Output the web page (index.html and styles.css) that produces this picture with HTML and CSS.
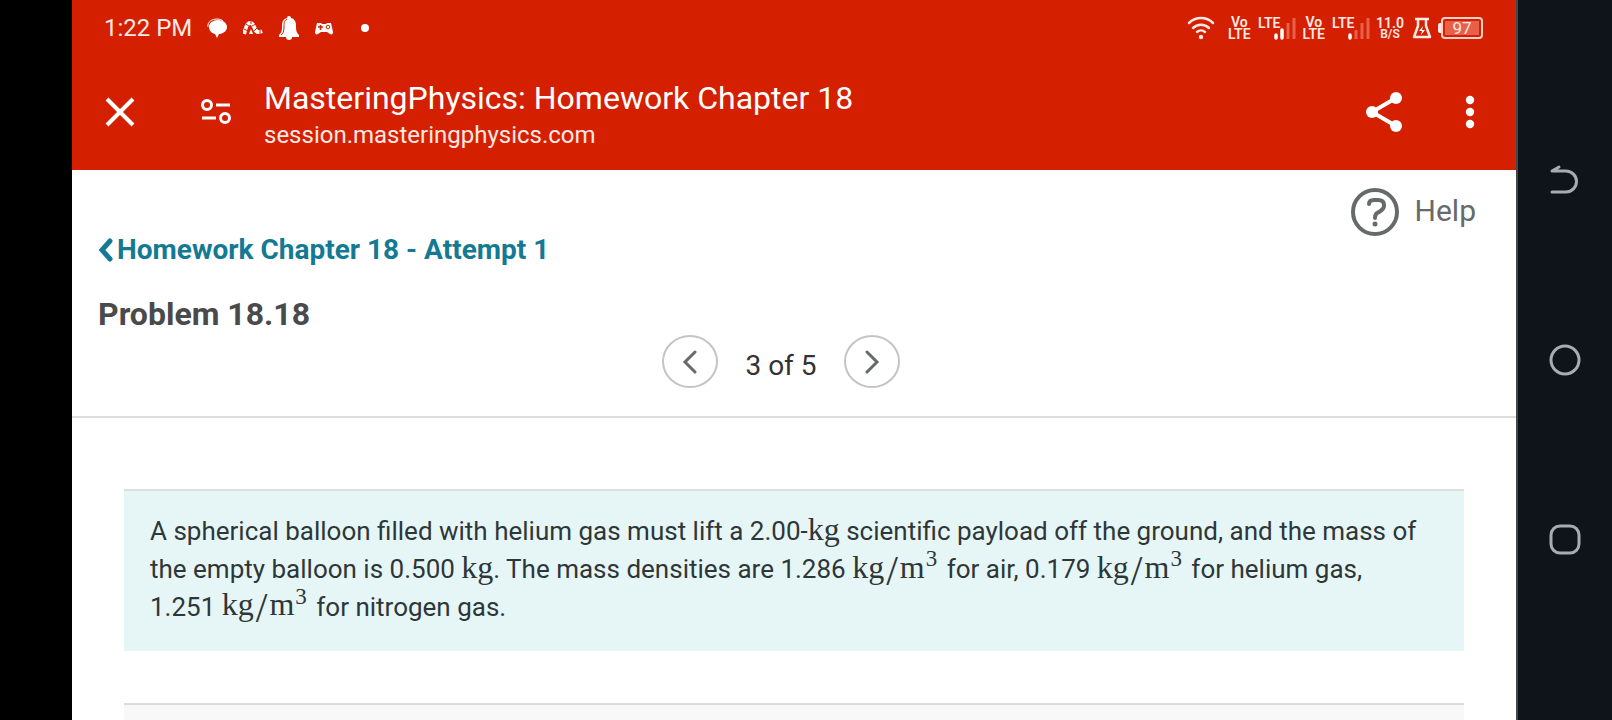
FILE: index.html
```html
<!DOCTYPE html>
<html lang="en">
<head>
    <meta charset="UTF-8">
    <meta name="viewport" content="width=device-width, initial-scale=1.0">
    <title>MasteringPhysics: Homework Chapter 18</title>
    <link rel="stylesheet" href="styles.css">
</head>
<body>
    <div class="screen">
        <div class="browser">
            <div class="top">
                <div class="status-bar">
                    <div class="status-left">
                        <span class="time">1:22 PM</span>
                        <svg class="chat" width="20" height="20" viewBox="0 0 20 20">
                            <path d="M1 9C0 4 5 1 10 1c3 0 5 1 6 2" fill="none" stroke="#fff" stroke-width="1"/>
                            <path d="M11 2c5 0 9 3 9 7 0 4-4 7-8 7l-2 4-2-4C4 15 2 12 2 9c0-4 4-7 9-7z" fill="#fff"/>
                        </svg>
                        <svg class="arch" width="20" height="16" viewBox="0 0 20 16">
                            <path d="M1 14C3 6 5 3 7 3s4 3 5 6 3 4 7 2" fill="none" stroke="#fff" stroke-width="4"/>
                            <path d="M8 9l2 5H6z" fill="#fff"/>
                            <path d="M1 9l4 2M3 4l4 3M8 0v4M13 4l-4 2M14 8l-3 3M17 9v5" stroke="#d41f00" stroke-width="1"/>
                        </svg>
                        <svg class="bell" width="20" height="26" viewBox="0 0 20 26">
                            <path d="M10 1a2 2 0 0 1 2 2c4 1 5 4 5 8 0 6 1 7 3 9v2H0v-2c2-2 3-3 3-9 0-4 1-7 5-8a2 2 0 0 1 2-2z" fill="#fff"/>
                            <path d="M7 22h6a3 3 0 0 1-6 0z" fill="#fff"/>
                            <path d="M8 4C5 6 5 8 5 12c0 4-1 7-3 8" fill="none" stroke="#d41f00" stroke-width="1"/>
                        </svg>
                        <svg class="gamepad" width="18" height="13" viewBox="0 0 18 13">
                            <path d="M2 1h4l1 1h4l1-1h4l2 9c0 2-1 3-3 2l-3-2H6l-3 2c-2 1-3 0-3-2z" fill="#fff"/>
                            <path d="M3 5h5M5.500 3v5" stroke="#d41f00" stroke-width="1.500"/>
                            <circle cx="13" cy="5" r="1.800" fill="none" stroke="#d41f00" stroke-width="1"/>
                        </svg>
                        <span class="dot"></span>
                    </div>
                    <div class="status-right">
                        <svg class="wifi" width="28" height="24" viewBox="0 0 28 24">
                            <g fill="none" stroke="#ffe9e2" stroke-width="2.500" stroke-linecap="round">
                                <path d="M2 7a17 17 0 0 1 24 0"/>
                                <path d="M6 12a11.500 11.500 0 0 1 16 0"/>
                                <path d="M10 16a6 6 0 0 1 8 0"/>
                            </g>
                            <circle cx="14" cy="21" r="2.200" fill="#ffe9e2"/>
                        </svg>
                        <span class="volte"><span>Vo</span><span>LTE</span></span>
                        <svg class="signal" width="38" height="28" viewBox="0 0 38 28">
                            <text x="0" y="14">LTE</text>
                            <path d="M18 24v-3M24 24v-8" stroke="#fff" stroke-width="3.500" stroke-linecap="round"/>
                            <path d="M30 25V9M36 25V4" stroke="#e8604a" stroke-width="3"/>
                        </svg>
                        <span class="volte"><span>Vo</span><span>LTE</span></span>
                        <svg class="signal" width="38" height="28" viewBox="0 0 38 28">
                            <text x="0" y="14">LTE</text>
                            <path d="M18 24v-3" stroke="#fff" stroke-width="3.500" stroke-linecap="round"/>
                            <path d="M24 25V16M30 25V9M36 25V4" stroke="#e8604a" stroke-width="3"/>
                        </svg>
                        <span class="speed"><span>11.0</span><span class="unit">B/S</span></span>
                        <svg class="flask" width="20" height="22" viewBox="0 0 20 22">
                            <path d="M3 2h14M6 2v7L2 20h16L14 9V2" fill="none" stroke="#ffe9e2" stroke-width="2.500" stroke-linejoin="round"/>
                            <path d="M11 9l-4 5h3l-1 4 4-5h-3z" fill="#fff"/>
                        </svg>
                        <span class="battery"><span class="level">97</span></span>
                    </div>
                </div>
                <div class="toolbar">
                    <button type="button" class="icon-button close" aria-label="Close">
                        <svg width="30" height="30" viewBox="0 0 30 30">
                            <path d="M2 2l26 26M28 2L2 28" stroke="#fff" stroke-width="4"/>
                        </svg>
                    </button>
                    <button type="button" class="icon-button tune" aria-label="Site settings">
                        <svg width="32" height="28" viewBox="0 0 32 28">
                            <g fill="none" stroke="#fff" stroke-width="3">
                                <circle cx="7" cy="7" r="4.500"/>
                                <circle cx="25" cy="20" r="4.500"/>
                                <path d="M16 7h14M2 20h14"/>
                            </g>
                        </svg>
                    </button>
                    <div class="page-info">
                        <div class="page-title">MasteringPhysics: Homework Chapter 18</div>
                        <div class="page-host">session.masteringphysics.com</div>
                    </div>
                    <button type="button" class="icon-button share" aria-label="Share">
                        <svg width="38" height="42" viewBox="0 0 38 42">
                            <path d="M31 7L7 21l24 14" fill="none" stroke="#fff" stroke-width="4"/>
                            <g fill="#fff">
                                <circle cx="31" cy="7" r="6"/>
                                <circle cx="7" cy="21" r="6"/>
                                <circle cx="31" cy="35" r="6"/>
                            </g>
                        </svg>
                    </button>
                    <button type="button" class="icon-button more" aria-label="More options">
                        <svg width="10" height="34" viewBox="0 0 10 34">
                            <g fill="#fff">
                                <circle cx="5" cy="5" r="4.200"/>
                                <circle cx="5" cy="17" r="4.200"/>
                                <circle cx="5" cy="29" r="4.200"/>
                            </g>
                        </svg>
                    </button>
                </div>
            </div>

            <div class="assignment-header">
                <div class="header-row">
                    <a href="#" class="back-link">
                        <svg width="16" height="24" viewBox="0 0 16 24">
                            <path d="M12 3L4 12l8 9" fill="none" stroke="#147a94" stroke-width="5" stroke-linecap="round"/>
                        </svg>Homework Chapter 18 - Attempt 1</a>
                    <a href="#" class="help">
                        <svg width="48" height="48" viewBox="0 0 48 48">
                            <g fill="none" stroke="#666a6a" stroke-width="4" stroke-linecap="round" stroke-linejoin="round">
                                <circle cx="24" cy="24" r="22"/>
                                <path d="M18 16c0-3 2-4 5-4h4c4 0 6 2 6 5v1c0 3-2 4-5 6-3 1-4 3-4 6"/>
                            </g>
                            <circle cx="24" cy="36" r="2.500" fill="#666a6a"/>
                        </svg>
                        <span>Help</span>
                    </a>
                </div>
                <h1>Problem 18.18</h1>
                <div class="pager">
                    <button type="button" class="pager-button" aria-label="Previous">
                        <svg width="16" height="24" viewBox="0 0 16 24">
                            <path d="M13 2L3 12l10 10" fill="none" stroke="#666a6a" stroke-width="3" stroke-linecap="round"/>
                        </svg>
                    </button>
                    <span class="pager-text">3 of 5</span>
                    <button type="button" class="pager-button" aria-label="Next">
                        <svg width="16" height="24" viewBox="0 0 16 24">
                            <path d="M3 2l10 10L3 22" fill="none" stroke="#666a6a" stroke-width="3" stroke-linecap="round"/>
                        </svg>
                    </button>
                </div>
            </div>

            <div class="content">
                <div class="intro">
                    <p>A spherical balloon filled with helium gas must lift a 2.00-<span class="math">kg</span> scientific payload off the ground, and the mass of the empty balloon is 0.500 <span class="math">kg</span>. The mass densities are 1.286 <span class="math">kg<span class="slash">/</span>m<sup>3</sup></span> for air, 0.179 <span class="math">kg<span class="slash">/</span>m<sup>3</sup></span> for helium gas, 1.251&nbsp;<span class="math">kg<span class="slash">/</span>m<sup>3</sup></span> for nitrogen gas.</p>
                </div>
                <div class="part"></div>
            </div>
        </div>

        <div class="system-nav">
            <button type="button" class="nav-button" aria-label="Back">
                <svg width="32" height="32" viewBox="0 0 32 32">
                    <path d="M10 3L3 7h14a10 10 0 0 1 0 21H3" fill="none" stroke="#a9acae" stroke-width="3" stroke-linecap="round" stroke-linejoin="round"/>
                </svg>
            </button>
            <button type="button" class="nav-button" aria-label="Home">
                <svg width="32" height="32" viewBox="0 0 32 32">
                    <circle cx="16" cy="16" r="14" fill="none" stroke="#a9acae" stroke-width="3"/>
                </svg>
            </button>
            <button type="button" class="nav-button" aria-label="Recent apps">
                <svg width="32" height="32" viewBox="0 0 32 32">
                    <rect x="2" y="2" width="28" height="27" rx="9" fill="none" stroke="#a9acae" stroke-width="3"/>
                </svg>
            </button>
        </div>
    </div>
</body>
</html>
```
FILE: styles.css
```css
* {
    box-sizing: border-box;
}
body {
    margin: 0;
    background: #000;
    font-family: Roboto, sans-serif;
}
button {
    padding: 0;
    border: none;
    background: none;
    cursor: pointer;
}
svg {
    display: block;
    flex-shrink: 0;
}
.screen {
    display: grid;
    grid-template-columns: 1fr 96px;
    height: 100vh;
    padding-left: 72px;
    overflow: hidden;
}
.browser {
    display: flex;
    flex-direction: column;
    min-width: 0;
    overflow: hidden;
    background: #fff;
}

/* red status bar and toolbar */
.top {
    background: #d41f00;
    color: #fff;
}
.status-bar {
    display: flex;
    justify-content: space-between;
    align-items: center;
    height: 56px;
    padding: 0 33px 0 32px;
}
.status-left, .status-right {
    display: flex;
    align-items: center;
}
.status-left {
    gap: 16px;
    color: #ffe9e2;
}
.time {
    font-size: 24px;
}
.chat {
    margin-left: -1px;
}
.dot {
    width: 8px;
    height: 8px;
    margin-left: 12px;
    border-radius: 50%;
    background: #fff;
}
.status-right {
    gap: 6px;
    color: #ffe9e2;
    font-weight: 600;
}
.wifi {
    margin-right: 6px;
}
.volte, .speed {
    display: flex;
    flex-direction: column;
    align-items: center;
    font-size: 14px;
    line-height: 12px;
}
.volte {
    padding: 0 1px;
}
.unit {
    font-size: 12px;
    line-height: 11px;
}
.signal text {
    font-size: 14px;
    fill: #ffe9e2;
}
.flask {
    margin-left: 2px;
}
.battery {
    display: flex;
    align-items: center;
}
.battery::before {
    content: "";
    width: 3px;
    height: 10px;
    border-radius: 2px 0 0 2px;
    background: #ffe9e2;
}
.level {
    width: 42px;
    height: 22px;
    padding: 2px;
    border: 2px solid #ffd0c6;
    border-radius: 4px;
    background: #e8604a content-box;
    font-size: 17px;
    font-weight: 400;
    line-height: 15px;
    text-align: center;
}
.toolbar {
    display: flex;
    align-items: center;
    height: 114px;
    padding: 0 41px 2px 33px;
}
.tune {
    margin: 0 32px 0 65px;
}
.page-info {
    flex: 1;
    min-width: 0;
    padding-top: 8px;
}
.page-title {
    font-size: 32px;
    line-height: 38px;
}
.page-host {
    color: #ffe9e2;
    font-size: 24px;
    line-height: 36px;
}
.share {
    margin-right: 62px;
}

/* assignment header */
.assignment-header {
    padding: 18px 40px 28px 26px;
    border-bottom: 2px solid #ddd;
}
.header-row {
    display: flex;
    justify-content: space-between;
    align-items: flex-start;
}
.back-link {
    display: flex;
    align-items: center;
    gap: 3px;
    margin-top: 46px;
    color: #147a94;
    font-size: 28px;
    font-weight: 700;
    line-height: 32px;
    text-decoration: none;
}
.help {
    display: flex;
    align-items: center;
    gap: 16px;
    color: #666a6a;
    font-size: 30px;
    text-decoration: none;
}
.help span {
    padding-bottom: 4px;
}
h1 {
    margin: 27px 0 0;
    color: #4a4a4a;
    font-size: 32px;
    font-weight: 700;
    line-height: 42px;
}
.pager {
    display: flex;
    justify-content: center;
    align-items: center;
    gap: 27px;
    padding-right: 12px;
}
.pager-button {
    display: flex;
    justify-content: center;
    align-items: center;
    width: 56px;
    height: 53px;
    border: 2px solid #c4c4c4;
    border-radius: 50%;
}
.pager-text {
    padding-top: 8px;
    color: #333;
    font-size: 28px;
}

/* problem text */
.content {
    padding: 71px 52px 0;
}
.intro {
    padding: 22px 26px 27px;
    border-top: 2px solid #dcdfdf;
    background: #e6f6f7;
}
.intro p {
    margin: 0;
    color: #2f3638;
    font-size: 26px;
    line-height: 36px;
}
.math {
    font-family: "Liberation Serif", serif;
    font-size: 32px;
    line-height: 32px;
    white-space: nowrap;
}
.math sup {
    padding: 0 3px 0 1px;
    font-size: 23px;
    line-height: 20px;
}
.slash {
    padding: 0 2px;
    font-size: 42px;
    line-height: 20px;
    vertical-align: -7px;
}
.part {
    height: 200px;
    margin-top: 52px;
    border-top: 2px solid #dcdcdc;
    background: #f8f8f8;
}

/* system navigation */
.system-nav {
    display: flex;
    flex-direction: column;
    justify-content: center;
    align-items: center;
    gap: 148px;
    border-left: 2px solid #43474a;
    background: #0f141a;
}
```
